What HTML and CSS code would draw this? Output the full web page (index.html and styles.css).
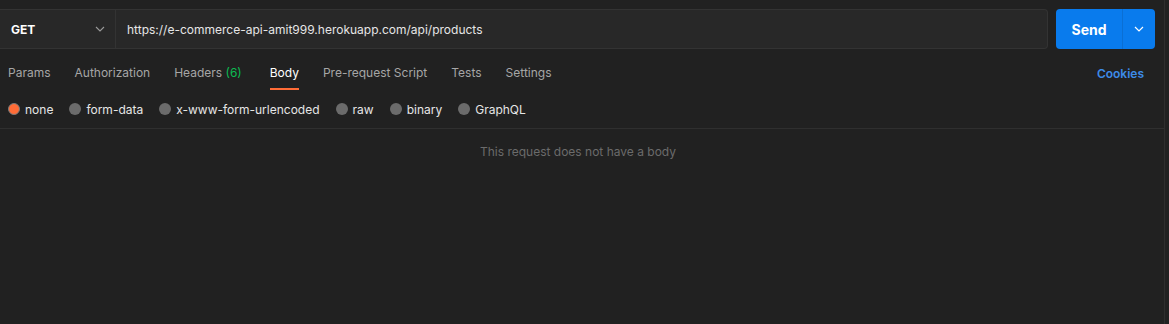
FILE: index.html
```html
<!DOCTYPE html>
<html>
<head>
<meta charset="utf-8">
<link rel="stylesheet" href="styles.css">
</head>
<body>
<div class="app">
  <div class="main">
    <div class="urlbar">
      <div class="inputgroup">
        <div class="method">
          <span class="method-name">GET</span>
          <svg class="chev" width="10" height="6" viewBox="0 0 10 6"><path d="M1 1l4 4 4-4" fill="none" stroke="#9a9a9a" stroke-width="1.1"/></svg>
        </div>
        <div class="url">https://e-commerce-api-amit999.herokuapp.com/api/products</div>
      </div>
      <div class="send">
        <span class="send-label">Send</span>
        <span class="send-drop"><svg width="10" height="6" viewBox="0 0 10 6"><path d="M1 1l4 4 4-4" fill="none" stroke="#fff" stroke-width="1.2"/></svg></span>
      </div>
    </div>
    <div class="tabs">
      <div class="tablist">
        <span class="tab">Params</span>
        <span class="tab">Authorization</span>
        <span class="tab">Headers <span class="count">(6)</span></span>
        <span class="tab active">Body</span>
        <span class="tab">Pre-request Script</span>
        <span class="tab">Tests</span>
        <span class="tab">Settings</span>
      </div>
      <span class="cookies">Cookies</span>
    </div>
    <div class="radios">
      <label class="radio"><span class="dot on"></span>none</label>
      <label class="radio"><span class="dot"></span>form-data</label>
      <label class="radio"><span class="dot"></span>x-www-form-urlencoded</label>
      <label class="radio"><span class="dot"></span>raw</label>
      <label class="radio"><span class="dot"></span>binary</label>
      <label class="radio"><span class="dot"></span>GraphQL</label>
    </div>
    <div class="empty">This request does not have a body</div>
  </div>
  <div class="side"></div>
</div>
</body>
</html>
```

FILE: styles.css
```css
* { box-sizing: border-box; }
html, body { margin: 0; padding: 0; background: #212121; }
body { font-family: Inter, "Noto Sans", sans-serif; color: #e0e0e0; }
.app { display: flex; width: 1169px; height: 324px; }
.main { flex: 1; display: flex; flex-direction: column; }
.side { width: 5px; border-left: 1px solid #2e2e2e; background: #212121; }
.urlbar { display: flex; gap: 8px; padding: 9px 9px 0 0; height: 49px; }
.inputgroup { flex: 1; display: flex; border: 1px solid #333; border-left: none; border-radius: 0 4px 4px 0; background: #282828; }
.method { width: 116px; display: flex; align-items: center; justify-content: space-between; padding: 0 10px 0 11px; border-right: 1px solid #333; }
.method-name { font-weight: 700; font-size: 12px; color: #fff; }
.url { display: flex; align-items: center; padding-left: 11px; font-size: 12px; color: #e6e6e6; }
.send { width: 99px; display: flex; background: #097bed; border-radius: 4px; color: #fff; }
.send-label { flex: 1; display: flex; align-items: center; justify-content: center; font-weight: 700; font-size: 14px; border-right: 1px solid #0a6fd4; }
.send-drop { width: 32px; display: flex; align-items: center; justify-content: center; }
.tabs { display: flex; justify-content: space-between; align-items: stretch; height: 41px; padding: 0 20px 0 8px; }
.tablist { display: flex; gap: 24px; }
.tab { font-size: 12px; color: #a6a6a6; display: flex; align-items: center; padding-top: 7px; border-bottom: 2px solid transparent; height: 41px; white-space: pre; }
.tab.active { color: #fff; border-bottom-color: #ff6c37; }
.count { color: #0cbb52; margin-right: 4px; }
.cookies { font-size: 12px; font-weight: 600; color: #3d8be8; display: flex; align-items: center; padding-top: 7px; }
.radios { display: flex; gap: 16px; padding: 0 8px; height: 39px; align-items: center; border-bottom: 1px solid #2f2f2f; }
.radio { display: flex; align-items: center; gap: 5px; font-size: 12px; color: #e6e6e6; }
.dot { width: 12px; height: 12px; border-radius: 50%; background: #6b6b6b; display: inline-block; }
.dot.on { background: #ff6c37; border: 1.5px solid #7a7a7a; }
.empty { text-align: center; font-size: 12px; color: #6b6b6b; padding: 15px 8px 0 0; }
```
